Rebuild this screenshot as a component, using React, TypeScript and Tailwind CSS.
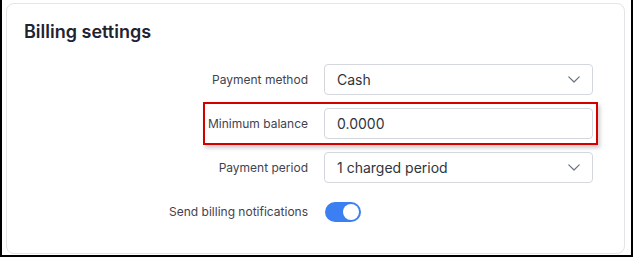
import React from "react";

function Chevron() {
  return (
    <svg width="12" height="7" viewBox="0 0 12 7" fill="none">
      <polyline points="0.8,0.8 6,6 11.2,0.8" stroke="#6b7280" strokeWidth="1.2" strokeLinecap="round" strokeLinejoin="round" />
    </svg>
  );
}

function Label({ children }: { children: React.ReactNode }) {
  return <div className="text-right text-[12px] text-[#3f4350] leading-none">{children}</div>;
}

function SelectBox({ value }: { value: string }) {
  return (
    <div className="h-[31px] w-[269px] rounded-[4px] border border-[#d4d7dd] bg-white flex items-center justify-between pl-[12px] pr-[12px]">
      <span className="text-[14px] text-[#30343c]">{value}</span>
      <Chevron />
    </div>
  );
}

export default function App() {
  return (
    <div className="w-[633px] h-[257px] bg-white border-l-2 border-r-2 border-b-2 border-black pl-[4px] pr-[6px] pt-[3px] pb-[1px] box-border" style={{ fontFamily: "Inter, 'Noto Sans', sans-serif" }}>
      <div className="h-full rounded-[8px] border border-[#e3e5e8] bg-white pl-[17px] pt-[14px]">
        <h2 className="text-[18px] font-semibold text-[#1f2430] leading-[28px]">Billing settings</h2>
        <div className="mt-[18px] grid grid-cols-[284px_269px] gap-x-[16px] gap-y-[13px] items-center">
          <Label>Payment method</Label>
          <SelectBox value="Cash" />

          <div className="relative col-span-2 grid grid-cols-[284px_269px] gap-x-[16px] items-center">
            <Label>Minimum balance</Label>
            <div className="h-[31px] w-[269px] rounded-[4px] border border-[#d4d7dd] bg-white flex items-center pl-[12px]">
              <span className="text-[14px] text-[#30343c]">0.0000</span>
            </div>
            <div className="absolute left-[179px] top-[-6px] w-[395px] h-[43px] border-2 border-[#d40000] shadow-[2px_3px_4px_rgba(0,0,0,0.2)] pointer-events-none" />
          </div>

          <Label>Payment period</Label>
          <SelectBox value="1 charged period" />

          <Label>Send billing notifications</Label>
          <div className="h-[31px] flex items-center">
            <div className="ml-[1px] w-[36px] h-[20px] rounded-full bg-[#3b7ff2] flex items-center justify-end pr-[2px]">
              <div className="w-[16px] h-[16px] rounded-full bg-white" />
            </div>
          </div>
        </div>
      </div>
    </div>
  );
}
